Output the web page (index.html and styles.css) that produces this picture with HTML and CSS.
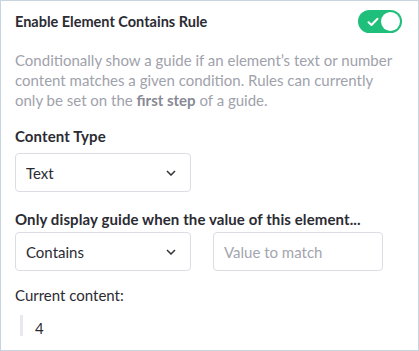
FILE: index.html
```html
<!DOCTYPE html>
<html lang="en">
<head>
    <meta charset="UTF-8">
    <title>Element Contains Rule</title>
    <link rel="stylesheet" href="styles.css">
</head>
<body>
    <div class="panel">
        <div class="header">
            <h1>Enable Element Contains Rule</h1>
            <span class="toggle on">
                <svg class="check" width="12" height="10" viewBox="0 0 12 10"><path d="M1.5 5.2 L4.5 8 L10.5 1.8" fill="none" stroke="#fff" stroke-width="2" stroke-linecap="round" stroke-linejoin="round"/></svg>
                <span class="knob"></span>
            </span>
        </div>
        <p class="desc">Conditionally show a guide if an element’s text or number content matches a given condition. Rules can currently only be set on the <b>first step</b> of a guide.</p>

        <label class="field-label">Content Type</label>
        <div class="select">
            <span>Text</span>
            <svg width="10" height="6" viewBox="0 0 10 6"><path d="M1 1 L5 5 L9 1" fill="none" stroke="#333" stroke-width="1.5"/></svg>
        </div>

        <label class="field-label tight">Only display guide when the value of this element...</label>
        <div class="row">
            <div class="select">
                <span>Contains</span>
                <svg width="10" height="6" viewBox="0 0 10 6"><path d="M1 1 L5 5 L9 1" fill="none" stroke="#333" stroke-width="1.5"/></svg>
            </div>
            <input class="value-input" type="text" placeholder="Value to match">
        </div>

        <div class="current-label">Current content:</div>
        <blockquote class="current">4</blockquote>
    </div>
</body>
</html>
```

FILE: styles.css
```css
body {
    margin: 0;
    font-family: Lato, "Open Sans", sans-serif;
    color: #2b2b33;
}

.panel {
    box-sizing: border-box;
    width: 419px;
    height: 351px;
    border: 1px solid #c8d5e0;
    padding: 9px 16px 0 14px;
    background: #fff;
}

.header {
    display: flex;
    justify-content: space-between;
    align-items: center;
    height: 23px;
}

h1 {
    margin: 0;
    font-size: 14.5px;
    font-weight: 700;
}

.toggle {
    position: relative;
    width: 44px;
    height: 23px;
    border-radius: 12px;
    background: #1dbf7a;
}

.toggle .check {
    position: absolute;
    left: 9px;
    top: 7px;
}

.toggle .knob {
    position: absolute;
    right: 2px;
    top: 2px;
    width: 19px;
    height: 19px;
    border-radius: 50%;
    background: #fff;
}

.desc {
    margin: 17px 0 1px;
    font-size: 15px;
    line-height: 20px;
    color: #a0a2ab;
}

.desc b {
    color: #878994;
}

.field-label {
    display: block;
    margin: 17px 0 8px;
    font-size: 15px;
    font-weight: 700;
    letter-spacing: 0.1px;
}

.field-label.tight {
    margin: 18px 0 4px;
}

.select {
    box-sizing: border-box;
    display: flex;
    justify-content: space-between;
    align-items: center;
    width: 176px;
    height: 39px;
    padding: 0 14px 0 10px;
    border: 1px solid #dcdde2;
    border-radius: 4px;
    font-size: 15px;
}

.row {
    display: flex;
    gap: 22px;
}

.value-input {
    box-sizing: border-box;
    width: 170px;
    height: 39px;
    padding: 0 10px;
    border: 1px solid #dcdde2;
    border-radius: 4px;
    font-family: inherit;
    font-size: 15px;
}

.value-input::placeholder {
    color: #a3a5ae;
}

.current-label {
    margin-top: 15px;
    font-size: 15px;
}

.current {
    margin: 11px 0 0 5px;
    padding: 4px 0 0 12px;
    height: 17px;
    border-left: 3px solid #e8e9ee;
    font-size: 15px;
    line-height: 18px;
}
```
